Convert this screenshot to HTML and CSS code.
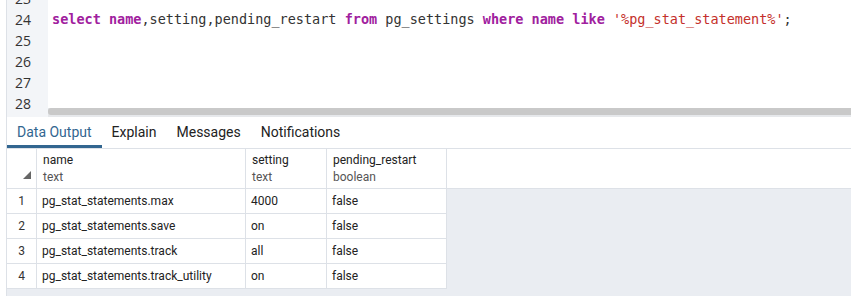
FILE: index.html
```html
<!DOCTYPE html>
<html>
<head>
<meta charset="utf-8">
<link rel="stylesheet" href="styles.css">
</head>
<body>
<div class="app">
  <div class="editor">
    <div class="gutter">
      <div class="ln">23</div>
      <div class="ln">24</div>
      <div class="ln">25</div>
      <div class="ln">26</div>
      <div class="ln">27</div>
      <div class="ln">28</div>
    </div>
    <div class="code-col">
      <div class="code">
        <div class="line"></div>
        <div class="line"><span class="kw">select</span> <span class="kw">name</span>,setting,pending_restart <span class="kw">from</span> pg_settings <span class="kw">where</span> <span class="kw">name</span> <span class="kw">like</span> <span class="str">'%pg_stat_statement%'</span>;</div>
        <div class="line"></div>
        <div class="line"></div>
        <div class="line"></div>
        <div class="line"></div>
      </div>
      <div class="hscroll"><div class="thumb"></div></div>
    </div>
  </div>
  <div class="tabs">
    <div class="tab active">Data Output</div>
    <div class="tab">Explain</div>
    <div class="tab">Messages</div>
    <div class="tab">Notifications</div>
  </div>
  <div class="grid">
    <div class="ghead">
      <div class="hc corner"><span class="tri"></span></div>
      <div class="hc"><div class="hn">name</div><div class="ht">text</div></div>
      <div class="hc"><div class="hn">setting</div><div class="ht">text</div></div>
      <div class="hc"><div class="hn">pending_restart</div><div class="ht">boolean</div></div>
      <div class="hfill"></div>
    </div>
    <div class="grow"><div class="c rn">1</div><div class="c">pg_stat_statements.max</div><div class="c">4000</div><div class="c">false</div></div>
    <div class="grow"><div class="c rn">2</div><div class="c">pg_stat_statements.save</div><div class="c">on</div><div class="c">false</div></div>
    <div class="grow"><div class="c rn">3</div><div class="c">pg_stat_statements.track</div><div class="c">all</div><div class="c">false</div></div>
    <div class="grow"><div class="c rn">4</div><div class="c">pg_stat_statements.track_utility</div><div class="c">on</div><div class="c">false</div></div>
  </div>
</div>
</body>
</html>
```
FILE: styles.css
```css
html, body {
  margin: 0;
  padding: 0;
  background: #fff;
  width: 851px;
  height: 296px;
  overflow: hidden;
}
.app {
  margin-left: 6px;
  border-left: 1px solid #dde1e7;
  height: 296px;
  display: flex;
  flex-direction: column;
  font-family: Roboto, "Liberation Sans", sans-serif;
}
.editor {
  display: flex;
  height: 117px;
  flex: none;
  overflow: hidden;
}
.gutter {
  width: 41px;
  flex: none;
  background: #f3f5f8;
  margin-top: -12px;
  font-family: "Open Sans", "DejaVu Sans", sans-serif;
  font-size: 14px;
  color: #333;
}
.ln {
  height: 21px;
  line-height: 21px;
  text-align: right;
  padding-right: 17px;
}
.code-col {
  flex: 1;
  display: flex;
  flex-direction: column;
  min-width: 0;
}
.code {
  flex: 1;
  overflow: hidden;
  margin-top: -12px;
  padding-left: 4px;
  font-family: "DejaVu Sans Mono", monospace;
  font-size: 13.5px;
  color: #333;
}
.line {
  height: 21px;
  line-height: 21px;
  white-space: pre;
}
.kw {
  color: #a0209e;
  font-weight: bold;
}
.str {
  color: #c4302b;
}
.hscroll {
  height: 9px;
  flex: none;
  background: #e6e8eb;
}
.thumb {
  height: 7px;
  background: #c9c9c9;
  border-radius: 3px 0 0 3px;
}
.tabs {
  display: flex;
  height: 31px;
  flex: none;
  border-bottom: 1px solid #dde1e7;
  font-size: 14px;
  color: #222;
}
.tab {
  padding: 0 10px;
  line-height: 30px;
  height: 28px;
  border-bottom: 3px solid transparent;
}
.tab.active {
  color: #326690;
  border-bottom-color: #326690;
}
.grid {
  flex: 1;
  background: #eaedf2;
  font-size: 12px;
  color: #222;
}
.ghead {
  display: grid;
  grid-template-columns: 30px 209px 81px 120px 1fr;
  height: 39px;
  background: #fff;
  border-bottom: 1px solid #dde1e7;
}
.hc {
  border-right: 1px solid #dde1e7;
  padding: 3px 0 0 6px;
  line-height: 17px;
}
.hn {
  color: #222;
}
.ht {
  color: #555;
}
.corner {
  padding: 0;
  display: flex;
  align-items: flex-end;
  justify-content: flex-end;
}
.tri {
  width: 0;
  height: 0;
  border-left: 8px solid transparent;
  border-bottom: 8px solid #666;
  margin: 0 5px 9px 0;
}
.grow {
  display: grid;
  grid-template-columns: 30px 209px 81px 120px;
  height: 25px;
}
.c {
  background: #fff;
  border-right: 1px solid #dde1e7;
  border-bottom: 1px solid #dde1e7;
  padding-left: 5px;
  line-height: 24px;
  white-space: nowrap;
  overflow: hidden;
}
.c.rn {
  padding-left: 0;
  text-align: center;
  color: #333;
}
```
